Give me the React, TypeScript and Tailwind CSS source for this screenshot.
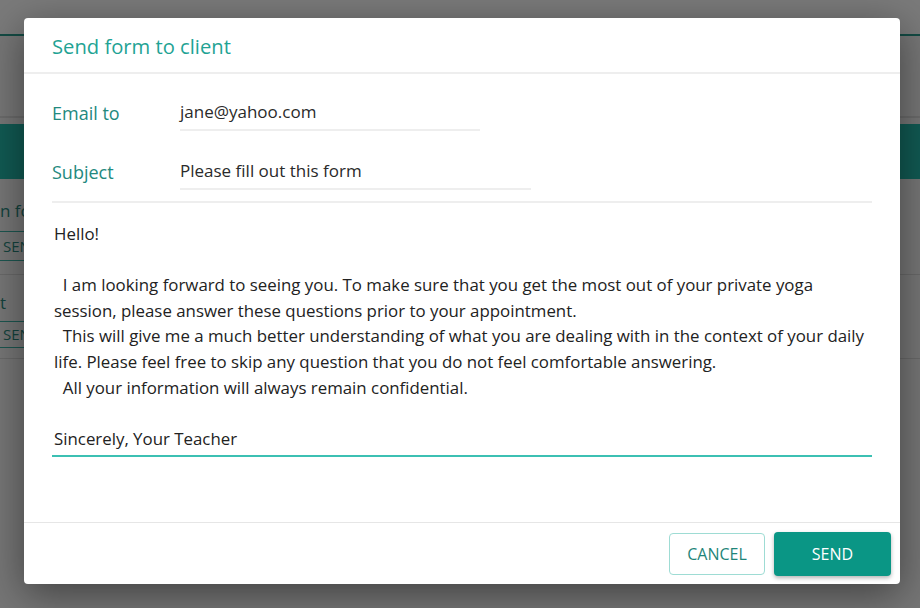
import React from "react";

const font = { fontFamily: '"Open Sans", "Noto Sans", sans-serif' };

function BackgroundPage() {
  return (
    <div className="w-[920px] h-[608px] bg-[#f7f7f7] flex flex-col">
      <div className="h-[36px] bg-white border-b-2 border-[#2a9d8f]" />
      <div className="h-[82px] border-b-2 border-[#e0e0e0]" />
      <div className="h-[6px]" />
      <div className="h-[55px] bg-[#24bcae]" />
      <div className="flex flex-col text-[#2a8b80] text-[17px]">
        <div className="h-[42px] flex items-end leading-none pb-[2px]">n form</div>
        <div className="mt-[10px] h-[30px] w-[80px] border border-l-0 border-[#3bb5a8] flex items-center px-[3px] text-[15px]">SEND</div>
        <div className="mt-[13px] border-b border-[#dcdcdc]" />
        <div className="h-[38px] flex items-end leading-none pb-[2px]">t</div>
        <div className="mt-[8px] h-[27px] w-[80px] border border-l-0 border-[#3bb5a8] flex items-center px-[3px] text-[15px]">SEND</div>
        <div className="mt-[10px] border-b border-[#dcdcdc]" />
      </div>
    </div>
  );
}

export default function App() {
  const body = `Hello!

  I am looking forward to seeing you. To make sure that you get the most out of your private yoga session, please answer these questions prior to your appointment.
  This will give me a much better understanding of what you are dealing with in the context of your daily life. Please feel free to skip any question that you do not feel comfortable answering.
  All your information will always remain confidential.

Sincerely, Your Teacher`;
  return (
    <div className="relative w-[920px] h-[608px] overflow-hidden" style={font}>
      <BackgroundPage />
      <div className="absolute inset-0 bg-black/[0.52]" />
      <div className="absolute left-[24px] top-[18px] w-[876px] h-[566px] bg-white rounded-[4px] shadow-[0_10px_40px_rgba(0,0,0,0.45)] flex flex-col">
        <div className="h-[56px] border-b-2 border-[#eeeeee] flex items-center px-[28px] pt-[3px]">
          <span className="text-[20.2px] text-[#1fa394] leading-none">Send form to client</span>
        </div>
        <div className="flex-1 flex flex-col px-[28px]">
          <div className="flex items-start mt-[24px]">
            <div className="w-[128px] text-[18px] text-[#23897e] leading-[28px] pt-[1px]">Email to</div>
            <div className="w-[300px] border-b-2 border-[#eeeeee] text-[17px] text-[#2a2a2a] leading-[28px] pb-[3px]">jane@yahoo.com</div>
          </div>
          <div className="flex items-start mt-[26px]">
            <div className="w-[128px] text-[18px] text-[#23897e] leading-[28px] pt-[1px]">Subject</div>
            <div className="w-[351px] border-b-2 border-[#eeeeee] text-[17px] text-[#2a2a2a] leading-[28px] pb-[3px]">Please fill out this form</div>
          </div>
          <div className="mt-[11px] border-b-2 border-[#eeeeee]" />
          <div className="mt-[18px] pb-[4px] border-b-2 border-[#3cc0b3]">
            <div className="pl-[2px] pr-[4px] whitespace-pre-wrap text-[16.85px] leading-[25.6px] text-[#222]">
              {body}
            </div>
          </div>
        </div>
        <div className="h-[62px] border-t border-[#e6e6e6] flex items-center justify-end gap-[9px] pr-[9px]">
          <button className="w-[96px] h-[42px] rounded-[4px] border border-[#9edcd4] text-[#1f8579] text-[16px] bg-white">CANCEL</button>
          <button className="w-[117px] h-[44px] rounded-[4px] bg-[#0a9685] text-white text-[16px] shadow-[0_2px_4px_rgba(0,0,0,0.3)]">SEND</button>
        </div>
      </div>
    </div>
  );
}
